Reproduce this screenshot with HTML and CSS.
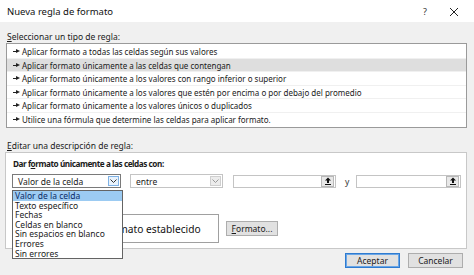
FILE: index.html
```html
<!DOCTYPE html>
<html lang="es">
<head>
    <meta charset="UTF-8">
    <meta name="viewport" content="width=device-width, initial-scale=1.0">
    <title>Nueva regla de formato</title>
    <link rel="stylesheet" href="styles.css">
</head>
<body>
    <div class="dialog">
        <div class="titlebar">
            <span class="title">Nueva regla de formato</span>
            <span class="tb-buttons">
                <span class="help">?</span>
                <svg class="close" width="10" height="10" viewBox="0 0 10 10">
                    <path d="M1 1 L9 9 M9 1 L1 9" stroke="#222" stroke-width="1" fill="none"/>
                </svg>
            </span>
        </div>

        <div class="content">
            <div class="label"><u>S</u>eleccionar un tipo de regla:</div>
            <ul class="rule-list">
                <li><span class="bullet"></span>Aplicar formato a todas las celdas según sus valores</li>
                <li class="selected"><span class="bullet"></span>Aplicar formato únicamente a las celdas que contengan</li>
                <li><span class="bullet"></span>Aplicar formato únicamente a los valores con rango inferior o superior</li>
                <li><span class="bullet"></span>Aplicar formato únicamente a los valores que estén por encima o por debajo del promedio</li>
                <li><span class="bullet"></span>Aplicar formato únicamente a los valores únicos o duplicados</li>
                <li><span class="bullet"></span>Utilice una fórmula que determine las celdas para aplicar formato.</li>
            </ul>

            <div class="label label-edit"><u>E</u>ditar una descripción de regla:</div>
            <div class="group">
                <div class="group-title">Dar f<u>o</u>rmato únicamente a las celdas con:</div>

                <div class="cond-row">
                    <div class="combo combo-type">
                        <span class="combo-text">Valor de la celda</span>
                        <span class="combo-arrow active">
                            <svg width="7" height="4" viewBox="0 0 7 4"><path d="M0.5 0.5 L3.5 3.5 L6.5 0.5" stroke="#333" fill="none"/></svg>
                        </span>
                        <!-- open dropdown list -->
                        <ul class="dropdown">
                            <li class="current">Valor de la celda</li>
                            <li>Texto específico</li>
                            <li>Fechas</li>
                            <li>Celdas en blanco</li>
                            <li>Sin espacios en blanco</li>
                            <li>Errores</li>
                            <li>Sin errores</li>
                        </ul>
                    </div>
                    <div class="combo combo-op">
                        <span class="combo-text">entre</span>
                        <span class="combo-arrow">
                            <svg width="7" height="4" viewBox="0 0 7 4"><path d="M0.5 0.5 L3.5 3.5 L6.5 0.5" stroke="#999" fill="none"/></svg>
                        </span>
                    </div>
                    <div class="field">
                        <span class="ref-btn">
                            <svg width="8" height="8" viewBox="0 0 8 8"><path d="M4 0.5 L7 3.5 H5 V6 H3 V3.5 H1 Z" fill="#111"/><path d="M1 7.5 H7" stroke="#111"/></svg>
                        </span>
                    </div>
                    <span class="and">y</span>
                    <div class="field">
                        <span class="ref-btn">
                            <svg width="8" height="8" viewBox="0 0 8 8"><path d="M4 0.5 L7 3.5 H5 V6 H3 V3.5 H1 Z" fill="#111"/><path d="M1 7.5 H7" stroke="#111"/></svg>
                        </span>
                    </div>
                </div>

                <div class="preview-row">
                    <div class="preview-box">Sin formato establecido</div>
                    <button class="btn"><u>F</u>ormato...</button>
                </div>
            </div>

            <div class="actions">
                <button class="btn btn-default">Aceptar</button>
                <button class="btn">Cancelar</button>
            </div>
        </div>
    </div>
</body>
</html>
```

FILE: styles.css
```css
body, html {
    margin: 0;
    padding: 0;
    width: 474px;
    height: 275px;
    overflow: hidden;
    background: #f0f0f0;
    font-family: "Noto Sans", "Open Sans", sans-serif;
    font-size: 8.5px;
    color: #1a1a1a;
}
.dialog {
    width: 474px;
    height: 275px;
}
.titlebar {
    height: 22px;
    background: #fff;
    display: flex;
    align-items: center;
    justify-content: space-between;
    padding: 1px 15px 0 7px;
    box-sizing: border-box;
}
.title {
    font-size: 9.5px;
    color: #111;
}
.tb-buttons {
    display: flex;
    align-items: center;
    gap: 22px;
}
.help {
    font-size: 9px;
    color: #333;
}
.content {
    padding: 8px 7px 0 6px;
}
.label {
    line-height: 13px;
    padding-left: 1px;
}
.label-edit {
    margin-top: 11px;
}
.rule-list {
    list-style: none;
    margin: 0;
    padding: 1px 0;
    background: #fff;
    border: 1px solid #9a9a9a;
    height: 81px;
    font-size: 8px;
}
.rule-list li {
    height: 13.5px;
    padding: 1px 0 0 6px;
    border-bottom: 1px solid #f0f0f0;
    box-sizing: border-box;
    white-space: nowrap;
    display: flex;
    align-items: center;
}
.rule-list li:last-child {
    border-bottom: none;
}
.rule-list li.selected {
    background: #dedede;
}
.bullet {
    width: 7px;
    height: 5px;
    margin-right: 2px;
    position: relative;
    flex-shrink: 0;
}
.bullet::before {
    content: "";
    position: absolute;
    left: 0;
    top: 2px;
    width: 3px;
    height: 1px;
    background: #222;
}
.bullet::after {
    content: "";
    position: absolute;
    left: 3px;
    top: 0;
    border-left: 4px solid #222;
    border-top: 2.5px solid transparent;
    border-bottom: 2.5px solid transparent;
}
.group {
    margin-left: -1px;
    background: #fff;
    border: 1px solid #c8c8c8;
    padding: 5px 5px 5px 6px;
    height: 85px;
}
.group-title {
    font-weight: bold;
    font-size: 8.2px;
    letter-spacing: -0.45px;
    line-height: 12px;
    padding-left: 1px;
}
.cond-row {
    margin-top: 4px;
    display: flex;
    align-items: center;
    height: 14px;
}
.combo {
    position: relative;
    height: 14px;
    box-sizing: border-box;
    border: 1px solid #9a9a9a;
    background: #fff;
    display: flex;
    align-items: center;
    justify-content: space-between;
    padding: 0 1px 0 5px;
}
.combo-type {
    width: 109px;
    border-color: #7a7a7a;
}
.combo-op {
    width: 93px;
    margin-left: 9px;
    border-color: #c4c4c4;
}
.combo-arrow {
    width: 11px;
    height: 10px;
    box-sizing: border-box;
    border: 1px solid #cfcfcf;
    background: #ececec;
    display: flex;
    align-items: center;
    justify-content: center;
}
.combo-arrow.active {
    border-color: #7fb2e5;
    background: #e8f2fc;
}
.dropdown {
    position: absolute;
    left: -1px;
    top: 15px;
    width: 111px;
    height: 69px;
    box-sizing: border-box;
    margin: 0;
    padding: 0;
    list-style: none;
    background: #fff;
    border: 1px solid #646464;
    z-index: 10;
}
.dropdown li {
    height: 9.6px;
    line-height: 9.6px;
    padding-left: 2px;
    font-size: 8.5px;
    white-space: nowrap;
}
.dropdown li.current {
    background: #9ccbf2;
    color: #0a2a66;
}
.field {
    width: 103px;
    height: 13px;
    box-sizing: border-box;
    border: 1px solid #c4c4c4;
    background: #fff;
    margin-left: 10px;
    display: flex;
    justify-content: flex-end;
    align-items: center;
    padding-right: 1px;
}
.field:last-child {
    width: 105px;
}
.ref-btn {
    width: 13px;
    height: 11px;
    box-sizing: border-box;
    border: 1px solid #b8b8b8;
    background: #e8e8e8;
    display: flex;
    align-items: center;
    justify-content: center;
}
.and {
    margin-left: 9px;
    width: 5px;
    color: #333;
}
.and + .field {
    margin-left: 6px;
}
.preview-row {
    margin-top: 26px;
    display: flex;
    align-items: center;
    height: 29px;
    padding-left: 57px;
}
.preview-box {
    width: 150px;
    height: 29px;
    box-sizing: border-box;
    border: 1px solid #a0a0a0;
    display: flex;
    align-items: center;
    justify-content: center;
    font-size: 10.2px;
    color: #111;
}
.btn {
    font-family: "Noto Sans", "Open Sans", sans-serif;
    font-size: 8.5px;
    color: #1a1a1a;
    height: 15px;
    padding: 0;
    box-sizing: border-box;
    border: 1px solid #adadad;
    background: #e1e1e1;
    line-height: 13px;
}
.preview-row .btn {
    width: 52px;
    margin-left: 7px;
}
.actions {
    margin-top: 4px;
    display: flex;
    justify-content: flex-end;
    gap: 8px;
    padding-right: 4px;
}
.actions .btn {
    width: 55px;
}
.btn-default {
    border: 1px solid #2f7bd0;
    box-shadow: inset 0 0 0 1px #6aa6e6;
    width: 54px;
}
```
